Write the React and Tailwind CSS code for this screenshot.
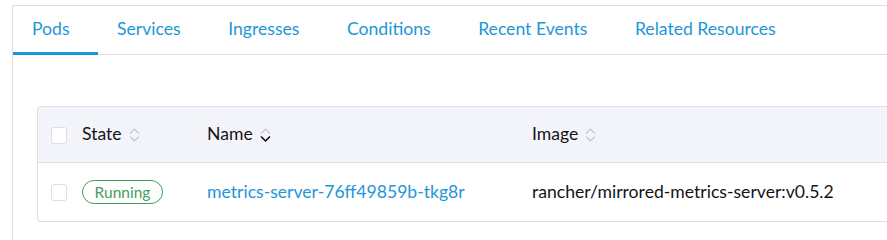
import { useState } from 'react'

const tabs = ['Pods', 'Services', 'Ingresses', 'Conditions', 'Recent Events', 'Related Resources']

const SortIcon = ({ active }) => (
  <svg width="11" height="16" viewBox="0 0 11 16" className="ml-[7px] mt-[2px]" fill="none" strokeWidth="1.3" strokeLinecap="round" strokeLinejoin="round">
    <path d="M1.5 6 L5.5 2 L9.5 6" stroke="#c6c8d2" />
    <path d="M1.5 10 L5.5 14 L9.5 10" stroke={active ? '#141419' : '#c6c8d2'} strokeWidth={active ? 1.7 : 1.3} />
  </svg>
)

const Checkbox = () => (
  <span className="block w-[16px] h-[17px] rounded-[3px] border border-[#dcdee7] bg-white" />
)

const App = () => {
  const [active, setActive] = useState('Pods')

  return (
    <div className="w-[887px] h-[240px] bg-white overflow-hidden pt-[5px] pl-[12px]" style={{ fontFamily: 'Lato, "Open Sans", sans-serif' }}>
      <div className="border-l border-t border-[#dcdee7] h-full">
        <ul className="flex h-[49px] border-b border-[#dcdee7]">
          {tabs.map(t => (
            <li
              key={t}
              onClick={() => setActive(t)}
              className={`pl-[19px] pr-[28.5px] flex items-center text-[17.6px] text-[#1e96d6] cursor-pointer border-b-[3px] -mb-px ${
                active === t ? 'border-[#1e96d6]' : 'border-transparent'
              }`}
            >
              <span className="pt-[1px]">{t}</span>
            </li>
          ))}
        </ul>

        <div className="pl-[24px] pt-[51px]">
          <div className="border border-r-0 border-[#dcdee7] rounded-l-[4px] overflow-hidden">
            <div className="flex items-center h-[56px] bg-[#f4f5fa] border-b border-[#dcdee7] text-[17.6px] text-[#141419]">
              <div className="w-[44px] pl-[13px] pt-[1px]"><Checkbox /></div>
              <div className="w-[125px] flex items-center -mt-[1px]">State<SortIcon /></div>
              <div className="w-[325px] flex items-center -mt-[1px]">Name<SortIcon active /></div>
              <div className="flex items-center -mt-[1px]">Image<SortIcon /></div>
            </div>
            <div className="flex items-center h-[58px] text-[17.6px] text-[#141419]">
              <div className="w-[44px] pl-[13px]"><Checkbox /></div>
              <div className="w-[125px]">
                <span className="inline-flex items-center justify-center w-[81px] h-[24px] rounded-full border border-[#3fa15a] text-[15.5px] text-[#4a9e5c]">
                  Running
                </span>
              </div>
              <div className="w-[325px]">
                <a href="#" className="text-[#1e96d6]">metrics-server-76ff49859b-tkg8r</a>
              </div>
              <div>rancher/mirrored-metrics-server:v0.5.2</div>
            </div>
          </div>
        </div>
      </div>
    </div>
  )
}

export default App
